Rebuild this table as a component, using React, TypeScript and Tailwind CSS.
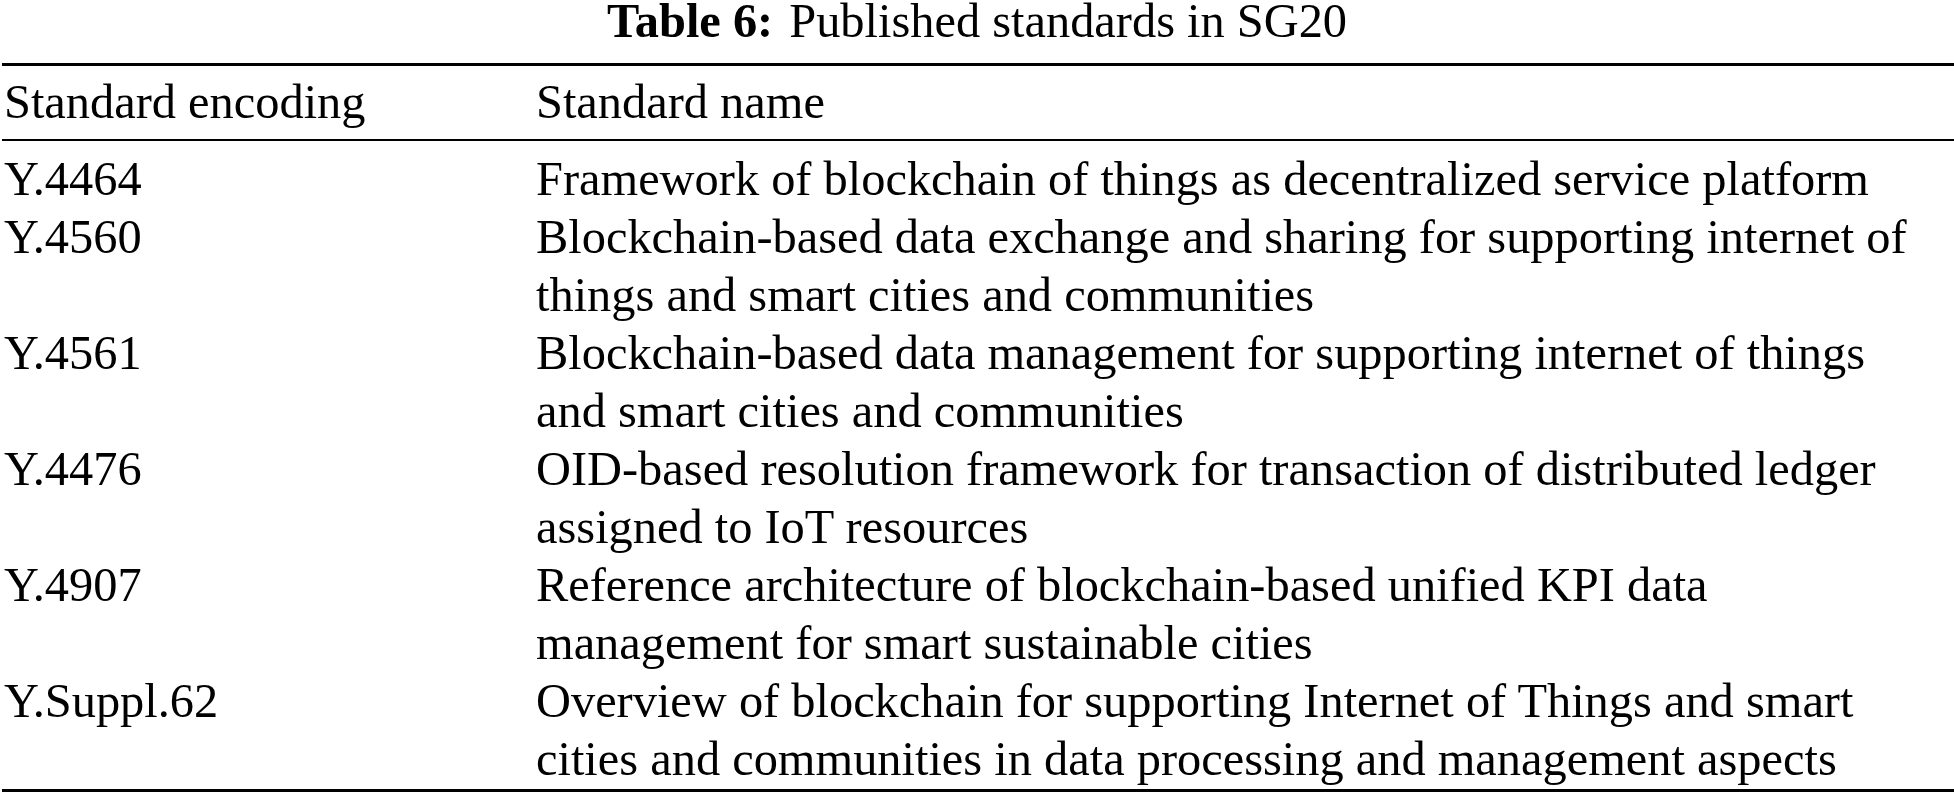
const rows = [
  {
    code: "Y.4464",
    name: "Framework of blockchain of things as decentralized service platform",
  },
  {
    code: "Y.4560",
    name: "Blockchain-based data exchange and sharing for supporting internet of things and smart cities and communities",
  },
  {
    code: "Y.4561",
    name: "Blockchain-based data management for supporting internet of things and smart cities and communities",
  },
  {
    code: "Y.4476",
    name: "OID-based resolution framework for transaction of distributed ledger assigned to IoT resources",
  },
  {
    code: "Y.4907",
    name: "Reference architecture of blockchain-based unified KPI data management for smart sustainable cities",
  },
  {
    code: "Y.Suppl.62",
    name: "Overview of blockchain for supporting Internet of Things and smart cities and communities in data processing and management aspects",
  },
];

export default function App() {
  return (
    <div className="w-[1954px] h-[796px] overflow-hidden bg-white text-black font-[family-name:'Liberation_Serif','Times_New_Roman',serif] text-[48.4px]">
      {/* Caption */}
      <div className="h-[42px] leading-[42px] text-center whitespace-nowrap">
        <span className="font-bold">Table 6:</span>
        <span className="ml-[16px]">Published standards in SG20</span>
      </div>

      {/* Table */}
      <div className="mt-[21px] ml-[2px] border-t-[3px] border-b-[3px] border-black">
        <div className="grid grid-cols-[534px_1fr] pt-[7px] pb-[8px] leading-[58px] border-b-2 border-black">
          <div className="pl-[2px]">Standard encoding</div>
          <div>Standard name</div>
        </div>
        <div className="grid grid-cols-[534px_1fr] pt-[9px] pb-[1px] leading-[58px]">
          {rows.map((r) => (
            <div key={r.code} className="contents">
              <div className="pl-[2px]">{r.code}</div>
              <div className="pr-[30px]">{r.name}</div>
            </div>
          ))}
        </div>
      </div>
    </div>
  );
}
